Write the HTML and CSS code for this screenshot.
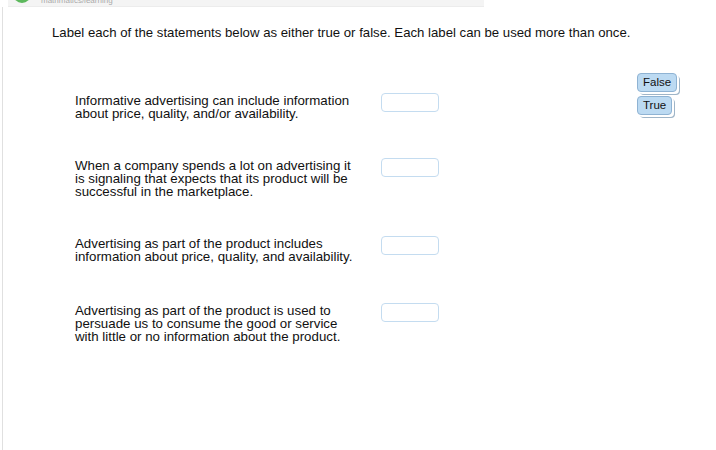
FILE: index.html
```html
<!DOCTYPE html>
<html lang="en">
<head>
  <meta charset="UTF-8">
  <title>Label true or false</title>
  <link rel="stylesheet" href="styles.css">
</head>
<body>

  <div class="topbar">
    <span class="logo"></span>
    <span class="brand">mathmatics/learning</span>
  </div>

  <div class="page">
    <p class="prompt">Label each of the statements below as either true or false. Each label can be used more than once.</p>

    <div class="work">
      <div class="statements">
        <div class="row">
          <div class="text">Informative advertising can include information about price, quality, and/or availability.</div>
          <div class="target"></div>
        </div>
        <div class="row">
          <div class="text">When a company spends a lot on advertising it is signaling that expects that its product will be successful in the marketplace.</div>
          <div class="target"></div>
        </div>
        <div class="row">
          <div class="text">Advertising as part of the product includes information about price, quality, and availability.</div>
          <div class="target"></div>
        </div>
        <div class="row">
          <div class="text">Advertising as part of the product is used to persuade us to consume the good or service with little or no information about the product.</div>
          <div class="target"></div>
        </div>
      </div>

      <div class="labels">
        <span class="chip">False</span>
        <span class="chip">True</span>
      </div>
    </div>
  </div>

</body>
</html>
```

FILE: styles.css
```css
* {
  box-sizing: border-box;
  margin: 0;
  padding: 0;
  font-family: "Liberation Sans", Arial, sans-serif;
}

body {
  background: #fff;
  color: #111;
  height: 450px;
  overflow: hidden;
}

/* Cropped header */
.topbar {
  margin-left: 8px;
  width: 476px;
  height: 7px;
  background: #f4f4f4;
  border-bottom: 1px solid #ececec;
  display: flex;
  align-items: flex-end;
  overflow: hidden;
}

.logo {
  width: 18px;
  height: 10px;
  margin-left: 5px;
  margin-bottom: 3px;
  background: #5cb85c;
  border-radius: 0 0 9px 9px;
}

.brand {
  margin-left: 10px;
  font-size: 8px;
  line-height: 8px;
  color: #aaa;
  margin-bottom: 1px;
}

/* Main area */
.page {
  margin-left: 2px;
  border-left: 1px solid #e0e0e0;
  height: 443px;
  padding: 18px 0 0 49px;
}

.prompt {
  font-size: 13.2px;
  line-height: 16px;
}

.work {
  display: flex;
  margin-top: 32px;
}

.statements {
  padding-left: 23px;
  width: 387px;
  padding-top: 21px;
}

.row {
  display: flex;
  align-items: flex-start;
  justify-content: space-between;
}

.row + .row { margin-top: 39px; }
.row:nth-child(4) { margin-top: 41px; }

.text {
  width: 281px;
  font-size: 13.3px;
  line-height: 13px;
  color: #111;
}

.target {
  width: 58px;
  height: 19px;
  border: 1.5px solid #c4dcf0;
  border-radius: 4px;
  margin-top: -1px;
}

.labels {
  margin-left: 198px;
  display: flex;
  flex-direction: column;
  align-items: flex-start;
  gap: 4px;
}

.chip {
  display: inline-block;
  font-size: 11.5px;
  line-height: 15px;
  padding: 1px 5px;
  background: #bcdaf2;
  border: 1px solid #8fb3d3;
  border-radius: 4px;
  box-shadow: 2px 2px 0 #fff, 3px 3px 0 #9fb5c8;
  color: #111;
}
```
